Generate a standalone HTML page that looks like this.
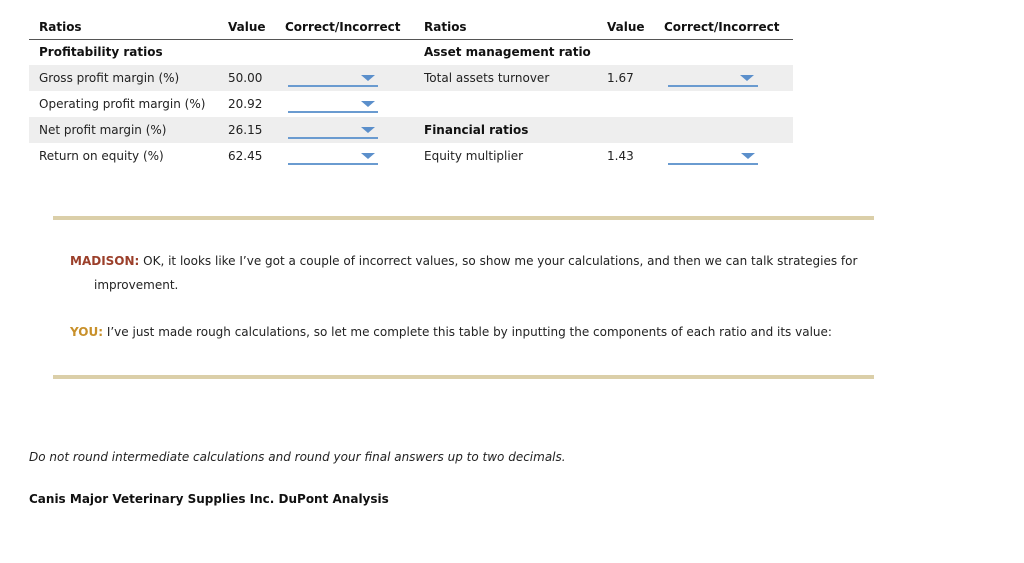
<!DOCTYPE html>
<html><head><meta charset="utf-8"><style>
body{margin:0;width:1024px;height:563px;background:#fff;position:relative;font-family:"DejaVu Sans","Liberation Sans",sans-serif;font-size:12px;color:#222;overflow:hidden}
.a{position:absolute;line-height:14px;white-space:nowrap}
.b{font-weight:bold;color:#111}
.g{position:absolute;background:#eeeeee;height:26px}
.dd{position:absolute;width:90px;height:2px;background:#6a9bd0}
.tri{position:absolute;width:0;height:0;border-left:7px solid transparent;border-right:7px solid transparent;border-top:6px solid #5b8fcb}
.bar{position:absolute;left:53px;width:821px;height:4px;background:#dbcfa9}
</style></head><body>
<div class="a b" style="left:39px;top:20px">Ratios</div>
<div class="a b" style="left:228px;top:20px">Value</div>
<div class="a b" style="left:285px;top:20px">Correct/Incorrect</div>
<div class="a b" style="left:424px;top:20px">Ratios</div>
<div class="a b" style="left:607px;top:20px">Value</div>
<div class="a b" style="left:664px;top:20px">Correct/Incorrect</div>
<div style="position:absolute;left:29px;top:39px;width:764px;height:1px;background:#555"></div>

<div class="g" style="left:29px;top:65px;width:764px"></div>
<div class="g" style="left:29px;top:117px;width:764px"></div>

<div class="a b" style="left:39px;top:45px">Profitability ratios</div>
<div class="a b" style="left:424px;top:45px">Asset management ratio</div>

<div class="a" style="left:39px;top:71px">Gross profit margin (%)</div>
<div class="a" style="left:228px;top:71px">50.00</div>
<div class="a" style="left:39px;top:97px">Operating profit margin (%)</div>
<div class="a" style="left:228px;top:97px">20.92</div>
<div class="a" style="left:39px;top:123px">Net profit margin (%)</div>
<div class="a" style="left:228px;top:123px">26.15</div>
<div class="a" style="left:39px;top:149px">Return on equity (%)</div>
<div class="a" style="left:228px;top:149px">62.45</div>

<div class="a" style="left:424px;top:71px">Total assets turnover</div>
<div class="a" style="left:607px;top:71px">1.67</div>
<div class="a b" style="left:424px;top:123px">Financial ratios</div>
<div class="a" style="left:424px;top:149px">Equity multiplier</div>
<div class="a" style="left:607px;top:149px">1.43</div>

<div class="dd" style="left:288px;top:85px"></div><div class="tri" style="left:361px;top:75px"></div>
<div class="dd" style="left:288px;top:111px"></div><div class="tri" style="left:361px;top:101px"></div>
<div class="dd" style="left:288px;top:137px"></div><div class="tri" style="left:361px;top:127px"></div>
<div class="dd" style="left:288px;top:163px"></div><div class="tri" style="left:361px;top:153px"></div>
<div class="dd" style="left:668px;top:85px"></div><div class="tri" style="left:740px;top:75px"></div>
<div class="dd" style="left:668px;top:163px"></div><div class="tri" style="left:741px;top:153px"></div>

<div class="bar" style="top:216px"></div>
<div class="a" style="left:70px;top:254px"><b style="color:#9b3f2a">MADISON:</b> OK, it looks like I’ve got a couple of incorrect values, so show me your calculations, and then we can talk strategies for</div>
<div class="a" style="left:94px;top:278px">improvement.</div>
<div class="a" style="left:70px;top:325px"><b style="color:#c8902a">YOU:</b> I’ve just made rough calculations, so let me complete this table by inputting the components of each ratio and its value:</div>
<div class="bar" style="top:375px"></div>

<div class="a" style="left:29px;top:450px;font-style:italic">Do not round intermediate calculations and round your final answers up to two decimals.</div>
<div class="a b" style="left:29px;top:492px">Canis Major Veterinary Supplies Inc. DuPont Analysis</div>
</body></html>
